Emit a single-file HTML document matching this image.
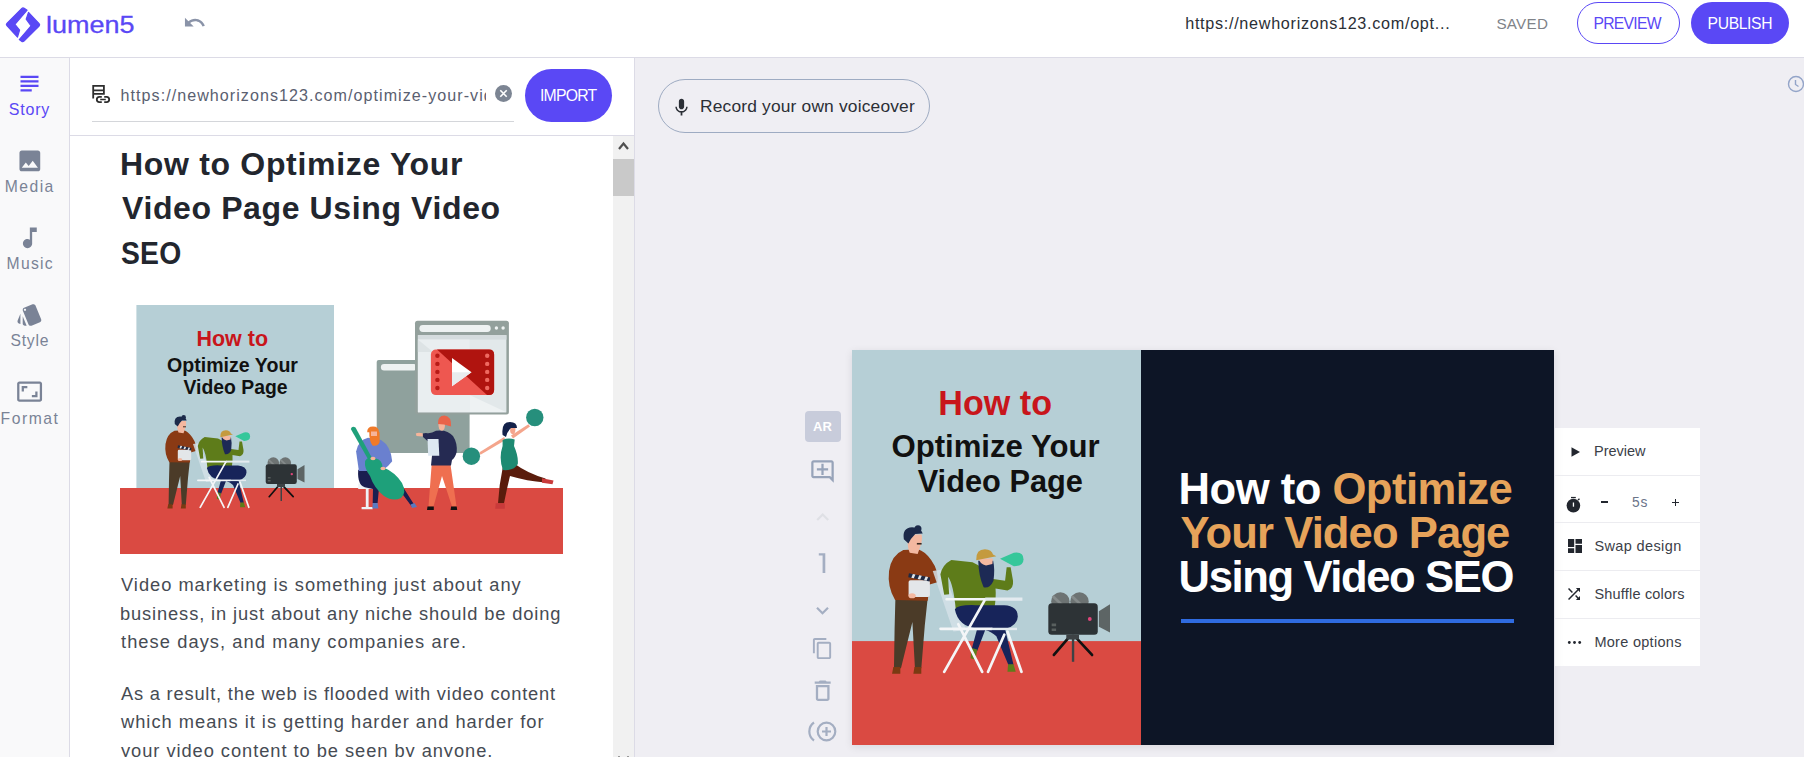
<!DOCTYPE html>
<html><head><meta charset="utf-8">
<style>
*{margin:0;padding:0;box-sizing:border-box}
html,body{width:1804px;height:757px;overflow:hidden;background:#efeef3;font-family:"Liberation Sans",sans-serif}
.a{position:absolute}
.t{position:absolute;white-space:nowrap;line-height:1}
svg{display:block}
</style></head><body>
<!-- top bar -->
<div class="a" style="left:0;top:0;width:1804px;height:57px;background:#fff"></div>
<div class="a" style="left:0;top:57px;width:1804px;height:1px;background:#dcdbe6"></div>
<!-- sidebar -->
<div class="a" style="left:0;top:58px;width:69px;height:699px;background:#f9f9fa"></div>
<div class="a" style="left:69px;top:58px;width:1px;height:699px;background:#dcdbe6"></div>
<!-- left panel -->
<div class="a" style="left:70px;top:58px;width:564px;height:699px;background:#fff"></div>
<div class="a" style="left:634px;top:58px;width:1px;height:699px;background:#dcdbe6"></div>
<div class="a" style="left:70px;top:135px;width:564px;height:1px;background:#dcdbe6"></div>
<!-- scrollbar -->
<div class="a" style="left:613px;top:136px;width:21px;height:621px;background:#f1f1f1"></div>
<div class="a" style="left:613px;top:159px;width:21px;height:37px;background:#c9c9c9"></div>


<!-- logo -->
<svg class="a" style="left:0;top:0" width="50" height="50" viewBox="0 0 50 50"><g fill="#5a48f5" stroke="#5a48f5" stroke-width="1.2" stroke-linejoin="round">
<path d="M27.1 10.2 L24.2 8.3 Q22.8 7.5 21.6 8.6 L6.9 23.3 Q5.8 24.5 6.9 25.7 L17.5 37 L19.6 30.1 L14.9 24.3 Z"/>
<path d="M19.3 39.6 L21.6 41.3 Q22.8 42.2 24 41.1 L39.1 26 Q40.2 24.8 39.1 23.6 L28.5 12.4 L26.2 19.2 L31.1 25.8 Z"/>
</g></svg>
<div class="t" id="t0" style="-webkit-text-stroke:0.3px #5a48f5;left:46.20px;top:14.26px;font-size:23.7px;color:#5a48f5;letter-spacing:0px;transform:scaleX(1.14);transform-origin:0 0">lumen5</div>
<!-- undo -->
<svg class="a" style="left:182.7px;top:11.2px" width="23.3" height="23.3" viewBox="0 0 24 24"><path fill="#8a93a8" d="M12.5 8c-2.65 0-5.05.99-6.9 2.6L2 7v9h9l-3.62-3.62c1.39-1.16 3.16-1.88 5.12-1.88 3.54 0 6.55 2.31 7.6 5.5l2.37-.78C21.08 11.03 17.15 8 12.5 8z"/></svg>
<div class="t" id="t1" style="left:1185.20px;top:14.62px;font-size:16.2px;color:#2b2f36;letter-spacing:0.700px">https://newhorizons123.com/opt...</div>
<div class="t" id="t2" style="left:1496.40px;top:15.88px;font-size:15.2px;color:#808389;letter-spacing:0.300px">SAVED</div>
<div class="a" style="left:1577px;top:2px;width:103px;height:42px;border:1px solid #5a48f5;border-radius:21px;background:#fff"></div>
<div class="t" id="t3" style="left:1593.50px;top:16.04px;font-size:15.7px;color:#5a48f5;letter-spacing:-0.733px">PREVIEW</div>
<div class="a" style="left:1691px;top:2px;width:98px;height:42px;border-radius:21px;background:#5a48f5"></div>
<div class="t" id="t4" style="left:1707.60px;top:16.04px;font-size:15.7px;color:#fff;letter-spacing:-0.367px">PUBLISH</div>
<!-- sidebar items -->
<svg class="a" style="left:15.9px;top:70.1px" width="27" height="27" viewBox="0 0 24 24"><path fill="#5a48f5" d="M14 17H4v2h10v-2zm6-8H4v2h16V9zM4 15h16v-2H4v2zM4 5v2h16V5H4z"/></svg>
<div class="t" id="t5" style="left:8.80px;top:101.74px;font-size:16px;color:#5a48f5;letter-spacing:0.800px">Story</div>
<svg class="a" style="left:15.5px;top:146.7px" width="27.7" height="27.7" viewBox="0 0 24 24"><path fill="#7a8396" d="M21 19V5c0-1.1-.9-2-2-2H5c-1.1 0-2 .9-2 2v14c0 1.1.9 2 2 2h14c1.1 0 2-.9 2-2zM8.5 13.5l2.5 3.01L14.5 12l4.5 6H5l3.5-4.5z"/></svg>
<div class="t" id="t6" style="left:4.80px;top:179.16px;font-size:15.7px;color:#7a8396;letter-spacing:1.450px">Media</div>
<svg class="a" style="left:15.7px;top:223.5px" width="27.7" height="27.7" viewBox="0 0 24 24"><path fill="#7a8396" d="M12 3v10.55c-.59-.34-1.27-.55-2-.55-2.21 0-4 1.79-4 4s1.79 4 4 4 4-1.79 4-4V7h4V3h-6z"/></svg>
<div class="t" id="t7" style="left:6.60px;top:255.70px;font-size:15.7px;color:#7a8396;letter-spacing:1.250px">Music</div>
<svg class="a" style="left:15.6px;top:300.8px" width="27.4" height="27.4" viewBox="0 0 24 24"><path fill="#7a8396" d="M2.53 19.65l1.34.56v-9.03l-2.43 5.86c-.41 1.02.08 2.19 1.09 2.61zm19.5-3.7L17.07 3.98c-.31-.75-1.04-1.21-1.81-1.23-.26 0-.53.04-.79.15L7.1 5.95c-.75.31-1.21 1.03-1.23 1.8-.01.27.04.54.15.8l4.960 11.97c.31.76 1.05 1.22 1.83 1.23.26 0 .52-.05.77-.15l7.36-3.05c1.02-.42 1.51-1.59 1.09-2.6zM7.88 8.75c-.55 0-1-.45-1-1s.45-1 1-1 1 .45 1 1-.45 1-1 1zm-2 11c0 1.1.9 2 2 2h1.45l-3.45-8.34v6.34z"/></svg>
<div class="t" id="t8" style="left:10.50px;top:332.94px;font-size:15.7px;color:#7a8396;letter-spacing:0.750px">Style</div>
<svg class="a" style="left:16.1px;top:377.9px" width="27.2" height="27.2" viewBox="0 0 24 24"><path fill="#7a8396" d="M19 12h-2v3h-3v2h5v-5zM7 9h3V7H5v5h2V9zm14-6H3c-1.1 0-2 .9-2 2v14c0 1.1.9 2 2 2h18c1.1 0 2-.9 2-2V5c0-1.1-.9-2-2-2zm0 16.01H3V4.99h18v14.02z"/></svg>
<div class="t" id="t9" style="left:0.60px;top:410.72px;font-size:15.7px;color:#7a8396;letter-spacing:1.520px">Format</div>
<!-- import header -->
<svg class="a" style="left:88px;top:82px" width="26" height="24" viewBox="88 82 26 24"><g fill="#2e2e2e"><path d="M92.3 85h12.5v1.8h-12.5zM92.3 89.5h12.5v1.7h-12.5zM92.3 93h12.5v1.7h-12.5zM92.3 85h1.8v13.6h-1.8zM103 85h1.8v9.7h-1.8z"/></g><g fill="none" stroke="#2e2e2e" stroke-width="1.8"><path d="M101.8 96.9H99.4a2.6 2.6 0 0 0 0 5.2H101.8M104.2 96.9H106.6a2.6 2.6 0 0 1 0 5.2H104.2"/><path d="M100.2 99.5H105.8" stroke-width="1.5"/></g></svg>
<div class="a" style="left:120px;top:80px;width:366px;height:30px;overflow:hidden">
<div class="t" id="t10" style="left:0.60px;top:7.26px;font-size:16.1px;color:#5a6070;letter-spacing:1.040px">https://newhorizons123.com/optimize-your-video-page</div></div>
<svg class="a" style="left:495px;top:85px" width="17" height="17" viewBox="0 0 17 17"><circle cx="8.5" cy="8.5" r="8.5" fill="#7c8593"/><path d="M5.3 5.3l6.4 6.4M11.7 5.3l-6.4 6.4" stroke="#fff" stroke-width="1.6"/></svg>
<div class="a" style="left:92px;top:121px;width:422px;height:1px;background:#d4d6da"></div>
<div class="a" style="left:525px;top:69px;width:87px;height:53px;border-radius:27px;background:#5a48f5"></div>
<div class="t" id="t11" style="left:540.00px;top:88.10px;font-size:15.8px;color:#fff;letter-spacing:-0.800px">IMPORT</div>
<div class="a" style="left:618px;top:756px;width:2.2px;height:1px;background:#999"></div><div class="a" style="left:627px;top:756px;width:2.2px;height:1px;background:#999"></div>
<!-- scrollbar arrow -->
<svg class="a" style="left:618px;top:141px" width="11" height="9" viewBox="0 0 11 9"><path d="M1 8L5.5 2.5L10 8" fill="none" stroke="#505050" stroke-width="2.2"/></svg>

<svg width="0" height="0" style="position:absolute"><defs><g id="ill">
<rect x="136.4" y="305" width="197.6" height="184" fill="#b6cfd6"/>
<rect x="120" y="488" width="443" height="66" fill="#da4a42"/>
<text x="196.5" y="346" font-family="Liberation Sans" font-weight="bold" font-size="21.5" fill="#c8151b" textLength="71.5" lengthAdjust="spacingAndGlyphs">How to</text>
<text x="167" y="372" font-family="Liberation Sans" font-weight="bold" font-size="19.5" fill="#111" textLength="131" lengthAdjust="spacingAndGlyphs">Optimize Your</text>
<text x="183.5" y="394" font-family="Liberation Sans" font-weight="bold" font-size="19.5" fill="#111" textLength="104" lengthAdjust="spacingAndGlyphs">Video Page</text>
<!-- standing man -->
<path d="M169.5 461 L189.8 461 L188 478 L185.8 505 L181.8 505 L180.2 476 L173 505 L168.6 505 L169 480 Z" fill="#4b3b28"/>
<path d="M168.2 504.3 h4.4 v4.3 h-5.2z M181.5 504.3 h4.3 v4.3 h-5z" fill="#7a3a12"/>
<path d="M174.5 430.8 Q167 434 165.5 444 Q164.3 454 169.3 462.2 L189.8 462.6 Q191 457 190.5 452.5 L195.9 451 Q197 444 192 437 Q188 431.5 183.7 430.3 Z" fill="#8a3a14"/>
<path d="M177.5 421 Q176.5 428 178.5 432.5 L183.5 433.3 L185.3 428 Q186.6 425 186 421 Z" fill="#f4b8a0"/>
<path d="M174.8 424 Q173.6 416.8 180 416.5 Q185.6 416.8 186.7 420.4 L182 420.6 Q179 423.5 177.7 426.6 Z" fill="#1c2a4a"/>
<circle cx="183.7" cy="417.3" r="2.2" fill="#1c2a4a"/>
<path d="M183 426.3 h3 v1 h-3z" fill="#3a2a22"/>
<rect x="177.8" y="449.7" width="13.4" height="10.5" rx="1.2" fill="#e3e6e9"/>
<path d="M178 445.3 L191.4 448 L191 450.6 L177.6 447.9 Z" fill="#1f2a44"/>
<path d="M180.5 445.8 l1.6 .3 l-1 2.4 l-1.6 -.3z M184.5 446.6 l1.6 .3 l-1 2.4 l-1.6 -.3z M188.5 447.4 l1.6 .3 l-1 2.4 l-1.6 -.3z" fill="#e3e6e9"/>
<ellipse cx="180" cy="459.5" rx="2.3" ry="1.6" fill="#f4b8a0"/>
<!-- chair back -->
<path d="M193 444 L199 443 L214 481 L206 482 Z" fill="#d3e0e8" opacity="0.85"/>
<!-- seated man -->
<path d="M204.7 437 Q199 440 197.8 446 L200.2 458.8 L203.3 458.5 L202.6 447.5 Q206 452 207.5 468.4 L231.6 468.4 Q233 461 232.5 455 L240 456.2 Q244 455 243.5 450 L242 441.5 L239.5 441.5 L238.5 450 L231 449 Q226 442 218 438.5 Z" fill="#5e7c1a"/>
<path d="M206.9 468 Q209 465 220 465.4 L238 465.5 Q246.5 466 246.5 472.5 Q246 478.5 238.5 480.4 L243.8 502.8 L240.6 503 L233 485 Q230 482 226 481 L221 494 L217.6 492.6 L221 480 Q209 479 206.9 468 Z" fill="#17245a"/>
<path d="M217.4 492.3 l3.6 1 l-1.2 6.5 l-3 -1z M240.4 502.6 h3.4 l1.4 4.6 h-5.2z" fill="#5e7c1a"/>
<path d="M221.6 437.5 Q221.8 447 225 454.2 Q229 455 231.2 450 Q232.2 443 231 437.5 Z" fill="#1d2a55"/>
<path d="M222 436 Q222.5 439.5 226.5 440.5 L230.5 439.5 L230.8 436 Z" fill="#f4b8a0"/>
<path d="M220.4 436.6 Q220.2 430.2 225.8 430.2 Q230.2 430.4 230.9 433.6 L233 434.6 L220.3 437.2z" fill="#c49a3e"/>
<path d="M235.3 436.2 L244 432.4 Q250.1 431.5 250.1 436.5 Q250.1 441 244 440.9 Z" fill="#35c79a"/>
<!-- chair -->
<g stroke="#f4f6f8" stroke-width="1.7" fill="none" stroke-linecap="round">
<path d="M201.7 461.7 H226.3 M197.9 480.3 H230"/>
<path d="M200.2 507.3 L225.6 462.4 M209.1 477.4 L224.1 507.3 M227.8 507.3 L238 484 M240 482 L248.8 507.3"/>
</g>
<path d="M226 460.6 H249.4 V462.6 H226z" fill="#e4ebf0"/>
<path d="M230 479.6 H246 V481.1 H230z" fill="#e4ebf0"/>
<!-- camera -->
<rect x="280.5" y="484" width="1.5" height="17" fill="#3d4245"/>
<g stroke="#111" stroke-width="1.7" stroke-linecap="round"><path d="M277.7 486.8 L269.2 496.7 M284 486.8 L293.2 496.7"/></g>
<rect x="277" y="484" width="8" height="3" fill="#3d4245"/>
<circle cx="273.3" cy="463.1" r="5.8" fill="#6d7373"/>
<circle cx="285.3" cy="463.1" r="5.8" fill="#6d7373"/>
<path d="M269 459 L277.6 467.2 L276.3 468.3 L267.8 460.2Z M281 459 L289.6 467.2 L288.3 468.3 L279.8 460.2Z" fill="#858b8b"/>
<rect x="265.7" y="464.2" width="31.1" height="19.8" rx="2.2" fill="#2d3336"/>
<path d="M297.5 469.2 L304.5 464.9 V482.6 L297.5 479 Z" fill="#5d6565"/>
<circle cx="291.8" cy="474.1" r="1.2" fill="#e0457a"/>
<path d="M267.8 477 h2.8 v1.6 h-2.8z M267.8 480 h2.8 v1.6 h-2.8z" fill="#59605f"/>
<!-- back browser -->
<rect x="376.7" y="360" width="92.9" height="93" rx="2" fill="#8fa19d"/>
<rect x="380.9" y="363.9" width="36" height="6.5" rx="3.2" fill="#eef2f2"/>
<!-- front browser -->
<rect x="415" y="320.7" width="93.9" height="93.9" rx="2.5" fill="#93a09c"/>
<rect x="417.9" y="335.1" width="88.5" height="77.2" fill="#e2e8ea"/>
<rect x="417.9" y="335.1" width="88.5" height="4.5" fill="#d5dcde"/>
<path d="M417.9 339.6 H469.6 V412.3 H417.9 Z" fill="#e9eef0"/>
<path d="M417.9 339.6 L433 352 L417.9 352 Z" fill="#dde3e5"/>
<path d="M469.6 395 L506.4 412.3 H469.6 Z" fill="#eef2f3"/>
<rect x="419.4" y="325" width="71.3" height="6.9" rx="3.4" fill="#eef2f2"/>
<circle cx="496.4" cy="328" r="1.7" fill="#eef2f2"/><circle cx="503.1" cy="328" r="1.7" fill="#eef2f2"/>
<rect x="430.9" y="349.5" width="63.2" height="45.6" rx="5" fill="#ee5750"/>
<path d="M437 349.5 H489.1 Q494.1 349.5 494.1 354.5 V390.1 Q494.1 395.1 489.1 395.1 H487 Z" fill="#b0140f"/>
<path d="M452 358.1 L452 386.3 L471.5 372.2 Z" fill="#fff"/>
<path d="M452 372.2 L471.5 372.2 L452 386.3 Z" fill="#e8ecee"/>
<g fill="#b81a16"><circle cx="437.4" cy="355.8" r="2.2"/><circle cx="437.4" cy="363.9" r="2.2"/><circle cx="437.4" cy="371.9" r="2.2"/><circle cx="437.4" cy="379.9" r="2.2"/><circle cx="437.4" cy="388" r="2.2"/></g>
<g fill="#ef6a61"><circle cx="487.2" cy="355.8" r="2.2"/><circle cx="487.2" cy="363.9" r="2.2"/><circle cx="487.2" cy="371.9" r="2.2"/><circle cx="487.2" cy="379.9" r="2.2"/><circle cx="487.2" cy="388" r="2.2"/></g>
<!-- guitarist -->
<path d="M358.2 483.5 H372.7 V489 H368.6 V507.1 H372.7 V509.2 H361.6 V507.1 H365.8 V489 H358.2Z" fill="#eef2f5"/>
<path d="M358.2 469.7 Q357 487 367 487.7 L373 489 L372.7 503 L377.6 503 L379 488 L398 488 L412 507 L415 506 L403 487 L385 473 Z" fill="#1a1e50"/>
<path d="M372.7 503 h4.9 l.8 5.5 h-6z M410.5 504.5 l4 -1.5 l2.5 4 l-5 1z" fill="#5a7ac0"/>
<path d="M368 437.7 Q358 440 356.1 451.6 L358.9 471 L380 471 Q386 468 388 466 L392.2 461.3 Q391 446 381 440 Z" fill="#6a80cf"/>
<path d="M369.3 431 Q369 441 372.5 445.5 Q377.5 447 379.7 442 L379.5 432 Z" fill="#f07a2a"/>
<path d="M367.2 432.2 Q367 426.6 373 426.6 Q379 426.6 379 432.2 Z" fill="#f07a2a"/>
<path d="M371 431.5 h6 v4.5 h-6z" fill="#f6b49a"/>
<path d="M350.8 429 Q352 425.5 355.5 427.5 L372 458 L368.5 460 Z" fill="#1fa07a"/>
<path d="M365.1 461 Q368 456 376 458.6 Q382 460 382.5 467 Q395 472 402 483 Q407 493 401 498 Q393 502 384 496 Q374 488 370 476 Q364 468 365.1 461Z" fill="#1ea07a"/>
<ellipse cx="373" cy="458.5" rx="2.6" ry="1.8" fill="#f6b49a"/>
<ellipse cx="383" cy="468.5" rx="2.6" ry="1.8" fill="#f6b49a"/>
<!-- center woman -->
<path d="M431.7 464.1 L450.4 464.1 L456.5 506.4 L452 506.6 L442 476 L433.5 506.4 L428.5 506.4 Z" fill="#ef6f50"/>
<path d="M427.5 506.4 h6.3 v3.6 h-6.8z M451.1 506.4 h5.6 l.5 3.6 h-6.6z" fill="#111"/>
<path d="M436 430.8 Q447 429 453 436 Q457.5 443 456.7 452 Q455 458 452 460 L451 465.5 L431 465.5 L433 446 L423 437 L422.7 433.5 L426 433 Q431 434 436 430.8Z" fill="#252a52"/>
<path d="M415.8 433.5 Q418 432 422.7 433.2 L422.7 436.4 L416.5 436Z" fill="#f6b49a"/>
<path d="M427.5 439.1 L438.5 439.1 L439.3 455.8 L428.2 455.8 Z" fill="#dde8f2"/>
<path d="M438.5 423 Q438 430.8 442 430.8 Q445 430.5 445 424Z" fill="#f6b49a"/>
<path d="M438 424 Q437.5 415.5 444.5 415.5 Q451.5 416 451.1 426.6 L444 424.5 Z" fill="#e8644a"/>
<!-- dancer -->
<circle cx="534.8" cy="417.5" r="8.7" fill="#268f7c"/>
<circle cx="471.4" cy="456.2" r="8.7" fill="#268f7c"/>
<path d="M479.5 452.2 L504.1 437 L505.5 440 L480.5 454.8 Z" fill="#f4a58c"/>
<path d="M511 435.5 L528.4 424.3 L530 426.5 L513 438.5 Z" fill="#f4a58c"/>
<path d="M503 466 Q499 485 498 503.3 L504 503.3 Q507 488 510 476 Q527 481 545.1 482.5 L545.5 478.5 Q527 473 515 464 Z" fill="#5a1c0c"/>
<path d="M495.7 503.3 h9.1 v5.4 h-9.6z" fill="#c93a3a"/><path d="M542 478.3 l11.5 2.2 l-1 3.8 l-10.5 -1.5z" fill="#c93a3a"/>
<path d="M502.6 440 Q508 437.5 514.7 439.5 L514 446 Q518.5 456 517.8 464 Q514 471 503 470 Q498.5 458 502.6 446 Z" fill="#1e8a72"/>
<path d="M510.2 428 Q509.5 434.2 513 434.2 Q515.5 434 515.5 428 Z" fill="#f4a58c"/>
<path d="M502.6 435 Q501 422 510 422 Q517 422 517 428 L511 428 Q507 432 506 437 Z" fill="#13214a"/>
</g>
</defs></svg>
<!-- left panel content -->
<div class="a" style="left:70px;top:136px;width:543px;height:621px;overflow:hidden">
<div class="t" id="t12" style="left:50.00px;top:11.91px;font-size:32px;font-weight:bold;color:#22262e;letter-spacing:0.684px">How to Optimize Your</div>
<div class="t" id="t13" style="left:52.00px;top:56.47px;font-size:32px;font-weight:bold;color:#22262e;letter-spacing:0.619px">Video Page Using Video</div>
<div class="t" id="t14" style="left:51.00px;top:101.03px;font-size:32px;font-weight:bold;color:#22262e;letter-spacing:0.250px;transform:scaleX(0.885);transform-origin:0 0">SEO</div>
<svg class="a" style="left:50px;top:169px" width="443" height="249" viewBox="120 305 443 249"><use href="#ill"/></svg>
<div class="t" id="t15" style="left:51.00px;top:439.51px;font-size:18.3px;color:#464b53;letter-spacing:0.983px">Video marketing is something just about any</div>
<div class="t" id="t16" style="left:50.00px;top:469.35px;font-size:18.3px;color:#464b53;letter-spacing:0.875px">business, in just about any niche should be doing</div>
<div class="t" id="t17" style="left:51.00px;top:496.75px;font-size:18.3px;color:#464b53;letter-spacing:1.064px">these days, and many companies are.</div>
<div class="t" id="t18" style="left:51.00px;top:548.75px;font-size:18.3px;color:#464b53;letter-spacing:0.792px">As a result, the web is flooded with video content</div>
<div class="t" id="t19" style="left:51.00px;top:577.31px;font-size:18.3px;color:#464b53;letter-spacing:0.991px">which means it is getting harder and harder for</div>
<div class="t" id="t20" style="left:51.00px;top:605.71px;font-size:18.3px;color:#464b53;letter-spacing:0.949px">your video content to be seen by anyone.</div>
</div>
<!-- main area -->
<div class="a" style="left:658px;top:79px;width:272px;height:54px;border:1px solid #9eabc2;border-radius:27px"></div>
<svg class="a" style="left:671.3px;top:97.2px" width="21" height="21" viewBox="0 0 24 24"><path fill="#2b2f36" d="M12 14c1.66 0 2.99-1.34 2.99-3L15 5c0-1.660-1.34-3-3-3S9 3.34 9 5v6c0 1.66 1.34 3 3 3zm5.3-3c0 3-2.54 5.1-5.3 5.1S6.7 14 6.7 11H5c0 3.41 2.72 6.23 6 6.72V21h2v-3.28c3.28-.48 6-3.3 6-6.72h-1.7z"/></svg>
<div class="t" id="t21" style="left:700.00px;top:98.17px;font-size:17.4px;color:#2b2f36;letter-spacing:0.167px">Record your own voiceover</div>
<svg class="a" style="left:1786px;top:74px" width="20" height="20" viewBox="0 0 20 20"><circle cx="10" cy="10" r="7.5" fill="none" stroke="#93a4c8" stroke-width="1.4"/><path d="M9.5 6v4.5l3 2" fill="none" stroke="#93a4c8" stroke-width="1.4"/></svg>
<!-- slide -->
<div class="a" style="left:852px;top:350px;width:702px;height:394.5px;background:#0d1526;overflow:hidden;box-shadow:0 2px 8px rgba(20,20,40,0.10)">
<svg class="a" style="left:0;top:0" width="289" height="394.5" viewBox="142.2 305 181.8 248" preserveAspectRatio="none"><use href="#ill"/></svg>
</div>
<div class="t" id="t22" style="left:1178.60px;top:468.01px;font-size:43.6px;font-weight:bold;color:#fff;letter-spacing:-0.517px">How to <span style="color:#e6a35a">Optimize</span></div>
<div class="t" id="t23" style="left:1180.60px;top:512.33px;font-size:43.6px;font-weight:bold;color:#e6a35a;letter-spacing:-0.901px">Your Video Page</div>
<div class="t" id="t24" style="left:1178.60px;top:556.45px;font-size:43.6px;font-weight:bold;color:#fff;letter-spacing:-1.399px">Using Video SEO</div>
<div class="a" style="left:1181px;top:619px;width:332.5px;height:3.5px;background:#2f6be0"></div>
<!-- tool column -->
<div class="a" style="left:805px;top:411px;width:36px;height:31px;border-radius:4px;background:#c8ccdb"></div>
<div class="t" id="t25" style="left:813.00px;top:420.00px;font-size:13px;font-weight:bold;color:#fff;letter-spacing:0.000px">AR</div>
<svg class="a" style="left:809px;top:458px" width="27" height="27" viewBox="0 0 24 24"><path fill="#97a3b9" d="M22 4c0-1.1-.9-2-2-2H4c-1.1 0-2 .9-2 2v12c0 1.1.9 2 2 2h14l4 4V4zm-2 13.17L18.83 16H4V4h16v13.17zM13 5h-2v4H7v2h4v4h2v-4h4V9h-4z"/></svg>
<svg class="a" style="left:812px;top:508px" width="22" height="16" viewBox="812 508 22 16"><path d="M817.2 520 L822.7 514.5 L828.2 520" fill="none" stroke="#dfe0e5" stroke-width="2.2"/></svg>
<svg class="a" style="left:815px;top:550px" width="14" height="26" viewBox="815 550 14 26"><path d="M818.8 553.2 H825.3 V573 H822.6 V555.6 H818.8 Z" fill="#a4aec2"/></svg>
<svg class="a" style="left:812px;top:602px" width="22" height="16" viewBox="812 602 22 16"><path d="M817 607.8 L822.5 613.3 L828 607.8" fill="none" stroke="#a4aec2" stroke-width="2.2"/></svg>
<svg class="a" style="left:811px;top:637px" width="23" height="23" viewBox="0 0 24 24"><path fill="#a4aec2" d="M16 1H4c-1.1 0-2 .9-2 2v14h2V3h12V1zm3 4H8c-1.1 0-2 .9-2 2v14c0 1.1.9 2 2 2h11c1.1 0 2-.9 2-2V7c0-1.1-.9-2-2-2zm0 16H8V7h11v14z"/></svg>
<svg class="a" style="left:809.3px;top:676.6px" width="27.4" height="27.4" viewBox="0 0 24 24"><path fill="#a4aec2" d="M16 9v10H8V9h8m-1.500-6h-5l-1 1H5v2h14V4h-3.5l-1-1zM18 7H6v12c0 1.1.9 2 2 2h8c1.1 0 2-.9 2-2V7z"/></svg>
<svg class="a" style="left:808px;top:719px" width="30" height="25" viewBox="0 0 30 25"><circle cx="18.5" cy="12.5" r="8.8" fill="none" stroke="#a4aec2" stroke-width="2.2"/><path d="M18.5 8v9M14 12.5h9" stroke="#a4aec2" stroke-width="2.2"/><path d="M6 3.5 A 11 11 0 0 0 6 21.5" fill="none" stroke="#a4aec2" stroke-width="2.2"/></svg>
<!-- right options panel -->
<div class="a" style="left:1555px;top:428px;width:145px;height:237.5px;background:#fff;box-shadow:inset 8px 0 8px -6px rgba(0,0,0,0.04)"></div>
<div class="a" style="left:1555px;top:475px;width:145px;height:1px;background:#ececf0"></div>
<div class="a" style="left:1555px;top:522px;width:145px;height:1px;background:#ececf0"></div>
<div class="a" style="left:1555px;top:570px;width:145px;height:1px;background:#ececf0"></div>
<div class="a" style="left:1555px;top:618px;width:145px;height:1px;background:#ececf0"></div>
<svg class="a" style="left:1571px;top:447px" width="10" height="10" viewBox="0 0 10 10"><path d="M0.5 0.3V9.7L9 5z" fill="#22262e"/></svg>
<div class="t" id="t27" style="left:1594.00px;top:443.73px;font-size:14.5px;color:#3b4048;letter-spacing:0.000px">Preview</div>
<svg class="a" style="left:1565px;top:495px" width="18" height="18" viewBox="0 0 18 18"><circle cx="8.4" cy="10.6" r="6.8" fill="#22262e"/><rect x="6" y="1.9" width="4.8" height="1.3" fill="#22262e"/><path d="M13 5l1.5-1.3" stroke="#22262e" stroke-width="1.5"/><rect x="7.8" y="7.5" width="1.3" height="4.2" fill="#fff"/></svg>
<div class="a" style="left:1600.5px;top:501px;width:7.3px;height:2px;background:#22262e"></div>
<div class="t" id="t28" style="left:1632.00px;top:495.90px;font-size:13.8px;color:#6b7489;letter-spacing:0.800px">5s</div>
<div class="a" style="left:1672px;top:501.7px;width:7.2px;height:1.3px;background:#22262e"></div>
<div class="a" style="left:1675px;top:498.7px;width:1.3px;height:7.2px;background:#22262e"></div>
<svg class="a" style="left:1567.5px;top:538.8px" width="14.2" height="14" viewBox="0 0 14.2 14"><path fill="#22262e" d="M0 0h6.2v8H0zM0 9.3h6.2V14H0zM7.5 0h6.7v4.7H7.5zM7.5 6h6.7v8H7.5z"/></svg>
<div class="t" id="t29" style="left:1594.40px;top:539.07px;font-size:14.5px;color:#3b4048;letter-spacing:0.380px">Swap design</div>
<svg class="a" style="left:1565px;top:585px" width="18" height="18" viewBox="0 0 24 24"><path fill="#22262e" d="M10.59 9.17L5.41 4 4 5.41l5.17 5.17 1.42-1.41zM14.5 4l2.04 2.04L4 18.59 5.41 20 17.96 7.46 20 9.5V4h-5.5zm.33 9.41l-1.41 1.41 3.13 3.13L14.5 20H20v-5.5l-2.04 2.04-3.13-3.13z"/></svg>
<div class="t" id="t30" style="left:1594.40px;top:587.07px;font-size:14.5px;color:#3b4048;letter-spacing:0.197px">Shuffle colors</div>
<svg class="a" style="left:1567px;top:640px" width="15" height="5" viewBox="0 0 15 5"><circle cx="2.3" cy="2.5" r="1.4" fill="#22262e"/><circle cx="7.5" cy="2.5" r="1.4" fill="#22262e"/><circle cx="12.7" cy="2.5" r="1.4" fill="#22262e"/></svg>
<div class="t" id="t31" style="left:1594.40px;top:635.19px;font-size:14.5px;color:#3b4048;letter-spacing:0.288px">More options</div>
</body></html>
